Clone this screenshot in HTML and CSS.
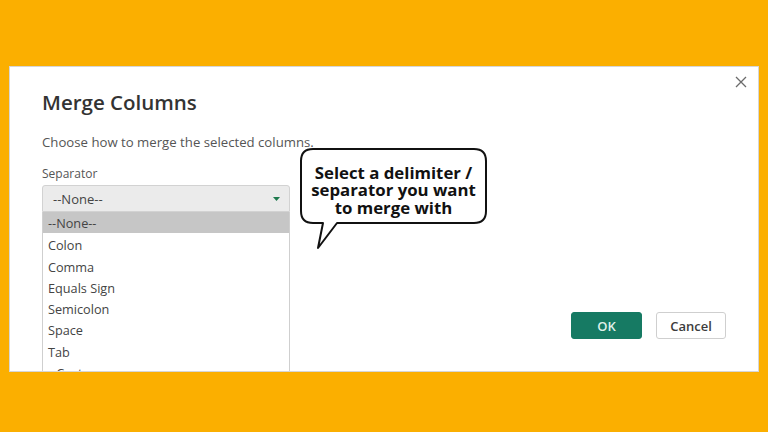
FILE: index.html
```html
<!DOCTYPE html>
<html lang="en">
<head>
  <meta charset="UTF-8">
  <title>Merge Columns</title>
  <link rel="stylesheet" href="styles.css">
</head>
<body>
  <div class="dialog">
    <button class="close" aria-label="Close">
      <svg width="12" height="12" viewBox="0 0 12 12"><path d="M1 1 L11 11 M11 1 L1 11" stroke="#6b6b6b" stroke-width="1.3" fill="none"/></svg>
    </button>

    <!-- Form Section -->
    <div class="form-col">
      <h1>Merge Columns</h1>
      <p class="desc">Choose how to merge the selected columns.</p>
      <label class="field-label">Separator</label>
      <div class="select">
        <span>--None--</span>
        <svg class="caret" width="7" height="4" viewBox="0 0 7 4"><path d="M0 0 H7 L3.5 4 Z" fill="#1e7a4e"/></svg>
      </div>
      <ul class="options">
        <li class="active">--None--</li>
        <li>Colon</li>
        <li>Comma</li>
        <li>Equals Sign</li>
        <li>Semicolon</li>
        <li>Space</li>
        <li>Tab</li>
        <li>--Custom--</li>
      </ul>
    </div>

    <!-- Buttons -->
    <div class="actions">
      <button class="btn btn-primary">OK</button>
      <button class="btn btn-secondary">Cancel</button>
    </div>

    <!-- Callout -->
    <div class="bubble">
      <svg width="190" height="104" viewBox="0 0 190 104">
        <path d="M13 1 H174 Q186 1 186 13 V63 Q186 75 174 75 H37 L18 100 L23 75 H13 Q1 75 1 63 V13 Q1 1 13 1 Z" fill="#fff" stroke="#111" stroke-width="2" stroke-linejoin="round"/>
      </svg>
      <div class="bubble-text">Select a delimiter /<br>separator you want<br>to merge with</div>
    </div>
  </div>
</body>
</html>
```

FILE: styles.css
```css
:root {
  --orange: #fbaf00;
  --teal: #167a63;
  --text: #444;
  --font-family: 'Open Sans', 'Noto Sans', sans-serif;
}

body {
  margin: 0;
  height: 432px;
  overflow: hidden;
  background-color: var(--orange);
  font-family: var(--font-family);
}

.dialog {
  position: relative;
  display: flex;
  justify-content: space-between;
  margin: 66px 9px 0 9px;
  height: 306px;
  box-sizing: border-box;
  background: white;
  border: 1px solid #d6d6d6;
  overflow: hidden;
}

.close {
  position: absolute;
  top: 9px;
  right: 11px;
  padding: 0;
  border: none;
  background: none;
  width: 12px;
  height: 12px;
}

.form-col {
  padding: 21px 0 0 32px;
  width: 248px;
}

h1 {
  margin: 0;
  font-size: 20.5px;
  line-height: 28px;
  font-weight: 600;
  color: #333;
}

.desc {
  margin: 17px 0 0;
  font-size: 13.2px;
  line-height: 18px;
  color: #555;
  white-space: nowrap;
}

.field-label {
  display: block;
  margin-top: 14px;
  font-size: 12px;
  line-height: 18px;
  color: #555;
}

.select {
  display: flex;
  align-items: center;
  justify-content: space-between;
  margin-top: 2px;
  height: 27px;
  box-sizing: border-box;
  padding: 1px 9px 0 10px;
  background: #ebebeb;
  border: 1px solid #d2d2d2;
  border-radius: 3px 3px 0 0;
  font-size: 13px;
  color: var(--text);
}

.options {
  list-style: none;
  margin: 0;
  padding: 0;
  border: 1px solid #cfcfcf;
  border-top: none;
}

.options li {
  height: 21.3px;
  line-height: 21.3px;
  padding: 2px 0 0 5px;
  margin-bottom: -2px;
  font-size: 12.7px;
  color: var(--text);
}

.options li.active {
  background: #c6c6c6;
  height: 20.3px;
  margin-bottom: 0;
  padding-top: 1px;
}

.actions {
  display: flex;
  gap: 14px;
  align-self: flex-end;
  padding: 0 32px 32px 0;
}

.btn {
  width: 71px;
  height: 27px;
  border-radius: 3px;
  font-family: var(--font-family);
  font-size: 13px;
  font-weight: 600;
  cursor: pointer;
}

.btn-primary {
  background: var(--teal);
  border: 1px solid var(--teal);
  color: #dff0ea;
}

.btn-secondary {
  width: 70px;
  background: white;
  border: 1px solid #cfcfcf;
  color: #3c3c3c;
}

.bubble {
  position: absolute;
  left: 290px;
  top: 81px;
  width: 190px;
  height: 104px;
}

.bubble svg {
  display: block;
}

.bubble-text {
  position: absolute;
  top: 15.5px;
  left: 0;
  width: 187px;
  text-align: center;
  font-size: 16.8px;
  line-height: 17.5px;
  font-weight: 700;
  color: #111;
}
```
